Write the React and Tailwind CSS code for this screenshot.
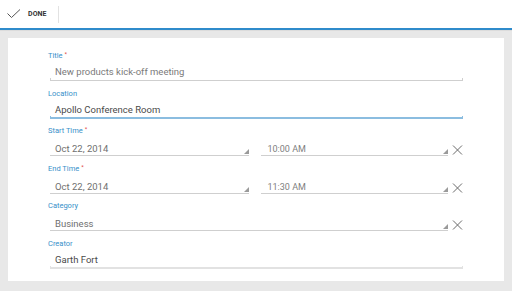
import React from "react";

const font = { fontFamily: "Roboto, 'Noto Sans', sans-serif" };

function Label({ text, required }) {
  return (
    <div className="h-[10px] flex items-center text-[7.5px] leading-[10px] text-[#3790c9]">
      <span>{text}</span>
      {required && <span className="ml-[2px] text-[#e0413a] text-[6px] leading-[6px] -mt-[4px]">*</span>}
    </div>
  );
}

function TextInput({ value, focused, readOnly, color = "text-[#666]" }) {
  const line = focused
    ? "border-[#8bbde0] border-b-2 border-x"
    : readOnly
    ? "border-[#e2e2e2] border-b-2 border-x"
    : "border-[#cfcfcf] border-b border-x";
  return (
    <div className="h-[20px] flex flex-col ml-[2px]">
      <div className={`h-[17px] flex items-end pl-[5px] text-[9.5px] leading-[12px] ${color}`}>{value}</div>
      <div className={`h-[3px] ${line}`} />
    </div>
  );
}

function Triangle() {
  return (
    <svg width="5" height="5" viewBox="0 0 5 5" className="mb-[1px]">
      <polygon points="5,0 5,5 0,5" fill="#9a9a9a" />
    </svg>
  );
}

function Select({ value, small, className = "" }) {
  return (
    <div className={`h-[20px] flex flex-col ${className}`}>
      <div
        className={`h-[19px] flex items-end justify-between ${
          small ? "pl-[6px] text-[9px] text-[#808080]" : "pl-[5px] text-[9.5px] text-[#6f6f6f]"
        } leading-[12px]`}
      >
        <span>{value}</span>
        <Triangle />
      </div>
      <div className="h-[1px] bg-[#cfcfcf]" />
    </div>
  );
}

function XIcon() {
  return (
    <svg width="11" height="10" viewBox="0 0 11 10" className="mb-[1px]">
      <path d="M1 0.5 L10 9.5 M10 0.5 L1 9.5" stroke="#6a6a6a" strokeWidth="1" fill="none" />
    </svg>
  );
}

export default function App() {
  return (
    <div className="w-[512px] h-[291px] bg-[#e8e8e8] flex flex-col overflow-hidden" style={font}>
      <div className="h-[28px] bg-white flex items-center shrink-0">
        <svg width="14" height="10" viewBox="0 0 14 10" className="ml-[7px]">
          <path d="M0.5 4.5 L4.5 8.5 L13 0.5" stroke="#555" strokeWidth="1" fill="none" />
        </svg>
        <span className="ml-[7px] text-[7px] font-bold text-[#333] tracking-[0.1px]">DONE</span>
        <div className="ml-[11px] w-[1px] h-[17px] bg-[#e2e2e2]" />
      </div>
      <div className="h-[2px] bg-[#2f8bcb] shrink-0" />
      <div className="h-[1px] bg-[#dcdcdc] shrink-0" />
      <div className="mx-[8px] mt-[7px] h-[243px] bg-white pl-[40px] pr-[41px] pt-[13px] flex flex-col">
        <Label text="Title" required />
        <TextInput value="New products kick-off meeting" color="text-[#7a7a7a]" />

        <div className="mt-[7.5px]">
          <Label text="Location" />
          <TextInput value="Apollo Conference Room" focused color="text-[#4a4a4a]" />
        </div>

        <div className="mt-[7.5px]">
          <Label text="Start Time" required />
          <div className="flex items-end ml-[2px]">
            <Select value="Oct 22, 2014" className="w-[200px]" />
            <Select value="10:00 AM" small className="ml-[12px] w-[187px]" />
            <div className="ml-[4px]"><XIcon /></div>
          </div>
        </div>

        <div className="mt-[7.5px]">
          <Label text="End Time" required />
          <div className="flex items-end ml-[2px]">
            <Select value="Oct 22, 2014" className="w-[200px]" />
            <Select value="11:30 AM" small className="ml-[12px] w-[187px]" />
            <div className="ml-[4px]"><XIcon /></div>
          </div>
        </div>

        <div className="mt-[7.5px]">
          <Label text="Category" />
          <div className="flex items-end ml-[2px]">
            <Select value="Business" className="w-[399px]" />
            <div className="ml-[4px]"><XIcon /></div>
          </div>
        </div>

        <div className="mt-[7.5px]">
          <Label text="Creator" />
          <TextInput value="Garth Fort" readOnly color="text-[#4a4a4a]" />
        </div>
      </div>
    </div>
  );
}
